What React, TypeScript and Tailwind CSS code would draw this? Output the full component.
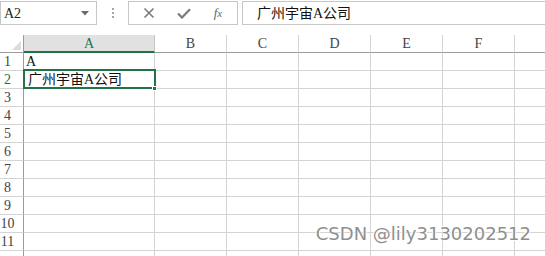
const cols = ["B", "C", "D", "E", "F"];
const rows = [1, 2, 3, 4, 5, 6, 7, 8, 9, 10, 11, 12];

const song = { fontFamily: '"Liberation Serif", "Noto Sans CJK SC", serif' };

function Toolbar() {
  return (
    <div className="flex items-center h-[24px] mt-px">
      {/* name box */}
      <div className="flex items-center justify-between w-[97px] h-full border border-[#c6c6c6] pl-[3px] pr-[6px] text-[14px] text-[#222]">
        <span>A2</span>
        <svg width="8" height="5" viewBox="0 0 8 5" className="mr-px">
          <path d="M0 0h8L4 4.5z" fill="#6b6b6b" />
        </svg>
      </div>
      {/* dots */}
      <div className="w-[31px] flex flex-col items-center gap-[2px]">
        <span className="w-[2px] h-[2px] bg-[#a6a6a6]" />
        <span className="w-[2px] h-[2px] bg-[#a6a6a6]" />
        <span className="w-[2px] h-[2px] bg-[#a6a6a6]" />
      </div>
      {/* cancel / enter / fx */}
      <div className="flex items-center w-[110px] h-full border border-[#c6c6c6]">
        <div className="w-[38px] flex justify-center pl-[2px]">
          <svg width="12" height="12" viewBox="0 0 12 12">
            <path d="M1.5 1.5l9 9M10.5 1.5l-9 9" stroke="#7a7a7a" strokeWidth="1.6" />
          </svg>
        </div>
        <div className="w-[34px] flex justify-center">
          <svg width="14" height="11" viewBox="0 0 14 11">
            <path d="M1 5.5l4 4L13 1.2" stroke="#7a7a7a" strokeWidth="2.2" fill="none" />
          </svg>
        </div>
        <div className="w-[34px] flex justify-center">
          <span className="text-[13px] italic text-[#666]">
            f<span className="text-[11px]">x</span>
          </span>
        </div>
      </div>
      <div className="w-[4px]" />
      {/* formula bar */}
      <div className="flex-1 flex items-center h-full border-t border-l border-b border-[#c6c6c6] pl-[14px] text-[14px] text-[#111]">
        广州宇宙A公司
      </div>
    </div>
  );
}

function HeaderRow() {
  return (
    <div className="flex h-[18px] mt-[10px] text-[14px] text-[#444]">
      <div className="w-[24px] shrink-0 border-r border-b border-[#9c9c9c] flex items-end justify-end pr-[2px] pb-[2px]">
        <svg width="9" height="9" viewBox="0 0 9 9">
          <path d="M9 0V9H0z" fill="#dcdcdc" />
        </svg>
      </div>
      <div className="w-[131px] shrink-0 bg-[#e1e1e1] border-r border-[#c6c6c6] border-b-2 border-b-[#217346] text-[#217346] flex items-center justify-center">
        A
      </div>
      {cols.map((c) => (
        <div
          key={c}
          className="w-[72px] shrink-0 border-r border-[#d4d4d4] border-b border-b-[#9c9c9c] flex items-center justify-center"
        >
          {c}
        </div>
      ))}
      <div className="flex-1 border-b border-[#9c9c9c]" />
    </div>
  );
}

function Row({ n }: { n: number }) {
  const selected = n === 2;
  return (
    <div className="flex h-[18px]">
      <div
        className={`w-[24px] shrink-0 border-r border-[#9c9c9c] border-b border-b-[#d4d4d4] text-[14px] leading-[18px] text-center pr-[8px] ${
          selected ? "text-[#217346]" : "text-[#444]"
        }`}
      >
        {n < 12 ? n : ""}
      </div>
      <div className="w-[131px] shrink-0 border-r border-b border-[#d4d4d4] text-[14px] leading-[17px] pl-[2px] text-[#111] whitespace-nowrap">
        {n === 1 ? "A" : n === 2 ? <span className="pl-[2px]">广州宇宙A公司</span> : ""}
      </div>
      {cols.map((c) => (
        <div key={c} className="w-[72px] shrink-0 border-r border-b border-[#d4d4d4]" />
      ))}
      <div className="flex-1 border-b border-[#d4d4d4]" />
    </div>
  );
}

export default function App() {
  return (
    <div className="relative w-[545px] h-[256px] overflow-hidden bg-white" style={song}>
      <Toolbar />
      <HeaderRow />
      {rows.map((n) => (
        <Row key={n} n={n} />
      ))}

      {/* active cell A2 */}
      <div className="absolute left-[23px] top-[69px] w-[133px] h-[20px] border-2 border-[#217346]" />
      <div className="absolute left-[152px] top-[86px] w-[5px] h-[5px] bg-[#217346] border border-white" />

      {/* watermark */}
      <div
        className="absolute right-[14px] bottom-[9px] text-[18px] text-[#8f8f8f]"
        style={{ fontFamily: '"DejaVu Sans", sans-serif', textShadow: "1px 1px 0 #fff, -1px -1px 0 #fff" }}
      >
        CSDN @lily3130202512
      </div>
    </div>
  );
}
